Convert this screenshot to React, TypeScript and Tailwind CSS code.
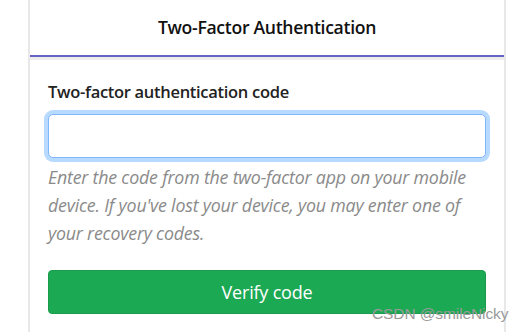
import React from "react";

export default function App() {
  return (
    <div className="relative w-[529px] h-[332px] bg-white overflow-hidden" style={{ fontFamily: '"Open Sans", "Noto Sans", sans-serif' }}>
      <div className="ml-[28px] w-[478px] h-full border-x-2 border-[#e8e8e8] flex flex-col">
        <div className="h-[55px] flex items-center justify-center">
          <h1 className="text-[17.6px] font-semibold text-[#111] tracking-[-0.3px] -mt-[1px]">Two-Factor Authentication</h1>
        </div>
        <div className="h-[2px] bg-[#6663c6]" />
        <div className="h-[3px] bg-[#ececec]" />
        <div className="px-[18px] pt-[21px]">
          <label className="block text-[16.5px] font-semibold text-[#222] tracking-[-0.3px] leading-[22px]">Two-factor authentication code</label>
          <div className="mt-[11px] h-[44px] rounded-[5px] border border-[#7fb7ff] shadow-[0_0_0_4px_rgba(0,123,255,0.28)] bg-white" />
          <p className="mt-[5px] text-[17.8px] italic text-[#8a8a8a] leading-[28px] tracking-[-0.2px]">
            Enter the code from the two-factor app on your mobile device. If you've lost your device, you may enter one of your recovery codes.
          </p>
          <button className="mt-[23px] w-full h-[44px] rounded-[4px] bg-[#1ca954] border border-[#1a9a4c] text-white text-[18px] tracking-[-0.2px]">
            Verify code
          </button>
        </div>
      </div>
      <div className="absolute left-[372px] top-[302px] text-[15.5px] text-[#9a9a9a] tracking-[-0.1px]" style={{ fontFamily: '"Liberation Sans", Arial, sans-serif' }}>
        CSDN @smileNicky
      </div>
    </div>
  );
}
